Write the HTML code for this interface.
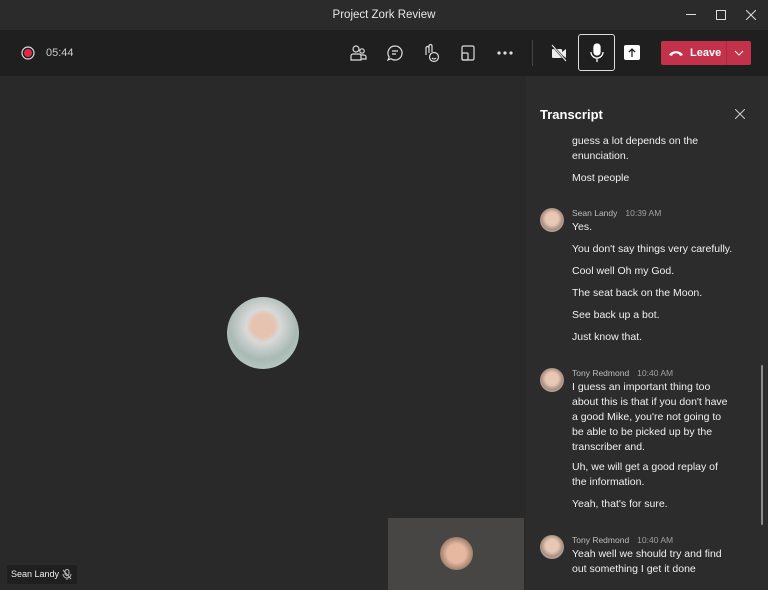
<!DOCTYPE html>
<html><head><style>
*{margin:0;padding:0;box-sizing:border-box}
html{width:768px;height:590px;overflow:hidden}
body{width:768px;height:590px;background:#292929;font-family:"Liberation Sans",sans-serif;color:#fff;position:relative;overflow:hidden;outline:1px solid #3a3a3a;outline-offset:-1px}
.title{position:absolute;left:0;top:0;width:768px;height:30px;background:#2b2b2b;font-size:11.5px;text-align:center;line-height:30px;color:#e8e8e8}
.tb{position:absolute;left:0;top:30px;width:768px;height:46px;background:#1f1f1f}
.main{position:absolute;left:0;top:76px;width:526px;height:514px;background:#292929}
.panel{position:absolute;left:526px;top:76px;width:242px;height:514px;background:#2d2c2c;overflow:hidden}
.ab{position:absolute;font-size:11px;color:#f0f0f0;white-space:nowrap}
.p{position:absolute;left:46px;font-size:10.5px;color:#f0f0f0;line-height:15px;width:190px;white-space:nowrap}
.nm{position:absolute;left:46px;font-size:8.5px;color:#bdbdbd;white-space:nowrap}
.nm span{margin-left:8px;color:#a0a0a0}
.av{position:absolute;left:14px;width:24px;height:24px;border-radius:50%;background:radial-gradient(circle at 50% 45%,#e8c8b4 0 35%,#a89080 60%,#ccd 100%)}
svg{position:absolute}
</style></head><body>
<div class="title">Project Zork Review
<svg style="left:686px;top:14px" width="10" height="2"><rect width="10" height="1" fill="#ddd"/></svg>
<svg style="left:716px;top:10px" width="10" height="10"><rect x=".5" y=".5" width="9" height="9" fill="none" stroke="#ddd"/></svg>
<svg style="left:746px;top:10px" width="10" height="10"><path d="M0 0L10 10M10 0L0 10" stroke="#ddd"/></svg>
</div>
<div class="tb">
<svg style="left:21px;top:16px" width="14" height="14"><circle cx="7" cy="7" r="6" fill="none" stroke="#ddd" stroke-width="1.2"/><circle cx="7" cy="7" r="4" fill="#e0294a"/></svg>
<div class="ab" style="left:46px;top:17px;color:#ccc">05:44</div>
<svg style="left:349px;top:14px" width="18" height="18" fill="none" stroke="#ddd" stroke-width="1.2"><circle cx="7" cy="5" r="3"/><circle cx="13" cy="7" r="2.2"/><path d="M2 16v-4a2 2 0 0 1 2-2h6a2 2 0 0 1 2 2v4zM12 11h3a2 2 0 0 1 2 2v2h-5"/></svg>
<svg style="left:386px;top:14px" width="18" height="18" fill="none" stroke="#ddd" stroke-width="1.2"><path d="M9 2a7 7 0 1 1-4 12.7L2 16l1.2-3A7 7 0 0 1 9 2zM6 7h6M6 10h4"/></svg>
<svg style="left:422px;top:13px" width="18" height="20" fill="none" stroke="#ddd" stroke-width="1.2"><path d="M4 12V5a1.5 1.5 0 0 1 3 0v5V3a1.5 1.5 0 0 1 3 0v6"/><circle cx="12" cy="14" r="4.5"/><path d="M10 15a2.5 2.5 0 0 0 4 0"/></svg>
<svg style="left:459px;top:14px" width="18" height="18" fill="none" stroke="#ddd" stroke-width="1.2"><rect x="3" y="2" width="12" height="14" rx="1.5"/><rect x="3" y="9" width="6" height="7" rx="1"/></svg>
<svg style="left:497px;top:20px" width="16" height="6" fill="#ddd"><circle cx="2" cy="3" r="1.6"/><circle cx="8" cy="3" r="1.6"/><circle cx="14" cy="3" r="1.6"/></svg>
<div style="position:absolute;left:532px;top:10px;width:1px;height:26px;background:#444"></div>
<svg style="left:550px;top:14px" width="18" height="18"><rect x="2" y="5" width="10" height="9" rx="1" fill="#eee"/><path d="M12 8l4-3v9l-4-3z" fill="#eee"/><path d="M2 1l14 16" stroke="#1f1f1f" stroke-width="2.2"/><path d="M2 1l14 16" stroke="#eee" stroke-width="1"/></svg>
<div style="position:absolute;left:578px;top:4px;width:37px;height:37px;border:1px solid #ddd;border-radius:3px"></div>
<svg style="left:589px;top:13px" width="16" height="20" fill="none" stroke="#fff" stroke-width="1.3"><rect x="5" y="1" width="6" height="11" rx="3" fill="#fff"/><path d="M2 9a6 6 0 0 0 12 0M8 15v4"/></svg>
<svg style="left:624px;top:15px" width="16" height="15"><rect x="0" y="0" width="16" height="15" rx="2" fill="#fff"/><path d="M8 12V4M5 7l3-3 3 3" stroke="#1f1f1f" stroke-width="1.3" fill="none"/></svg>
<div style="position:absolute;left:661px;top:11px;width:90px;height:24px;background:#c4314b;border-radius:2px"></div>
<div style="position:absolute;left:726px;top:11px;width:1px;height:24px;background:#a82a40"></div>
<svg style="left:668px;top:19px" width="16" height="8"><path d="M1 6c2-5 12-5 14 0l-3 1-1-2c-2-1-4-1-6 0l-1 2z" fill="#fff"/></svg>
<div class="ab" style="left:690px;top:17px;font-weight:bold;color:#fff">Leave</div>
<svg style="left:734px;top:20px" width="10" height="6"><path d="M1 1l4 4 4-4" stroke="#fff" fill="none"/></svg>
</div>
<div class="main">
<div style="position:absolute;left:227px;top:221px;width:72px;height:72px;border-radius:50%;background:radial-gradient(circle at 50% 40%,#e5c3b0 0 20%,#d9d9d9 30%,#a9b9b4 60%,#c7d9d5 100%)"></div>
<div style="position:absolute;left:388px;top:442px;width:136px;height:72px;background:#484644"></div>
<div style="position:absolute;left:440px;top:461px;width:33px;height:33px;border-radius:50%;background:radial-gradient(circle at 50% 50%,#e6b8a0 0 40%,#a0806c 70%,#9ab 100%)"></div>
<div style="position:absolute;left:7px;top:489px;width:70px;height:19px;background:#1f1f1f;border-radius:2px;font-size:9px;line-height:19px;padding-left:4px;color:#eee;white-space:nowrap">Sean Landy</div>
<svg style="left:62px;top:493px" width="10" height="11" fill="none" stroke="#bbb" stroke-width="1"><rect x="3" y="0.5" width="4" height="6" rx="2"/><path d="M1 5a4 4 0 0 0 8 0M5 9v2M1 1l8 9"/></svg>
</div>
<div class="panel">
<div style="position:absolute;left:14px;top:31px;font-size:13px;font-weight:bold;color:#fff">Transcript</div>
<svg style="left:209px;top:33px" width="10" height="10"><path d="M0 0L10 10M10 0L0 10" stroke="#ccc"/></svg>
<div class="p" style="top:58px">guess a lot depends on the<br>enunciation.</div>
<div class="p" style="top:95px">Most people</div>
<div class="av" style="top:132px"></div>
<div class="nm" style="top:132px">Sean Landy<span>10:39 AM</span></div>
<div class="p" style="top:144px">Yes.</div>
<div class="p" style="top:166px">You don't say things very carefully.</div>
<div class="p" style="top:188px">Cool well Oh my God.</div>
<div class="p" style="top:210px">The seat back on the Moon.</div>
<div class="p" style="top:232px">See back up a bot.</div>
<div class="p" style="top:254px">Just know that.</div>
<div class="av" style="top:292px"></div>
<div class="nm" style="top:292px">Tony Redmond<span>10:40 AM</span></div>
<div class="p" style="top:304px">I guess an important thing too<br>about this is that if you don't have<br>a good Mike, you're not going to<br>be able to be picked up by the<br>transcriber and.</div>
<div class="p" style="top:384px">Uh, we will get a good replay of<br>the information.</div>
<div class="p" style="top:421px">Yeah, that's for sure.</div>
<div class="av" style="top:459px"></div>
<div class="nm" style="top:459px">Tony Redmond<span>10:40 AM</span></div>
<div class="p" style="top:471px">Yeah well we should try and find<br>out something I get it done</div>
<div style="position:absolute;left:235px;top:289px;width:2px;height:160px;background:#8a8a8a;border-radius:1px"></div>
</div>
</body></html>
